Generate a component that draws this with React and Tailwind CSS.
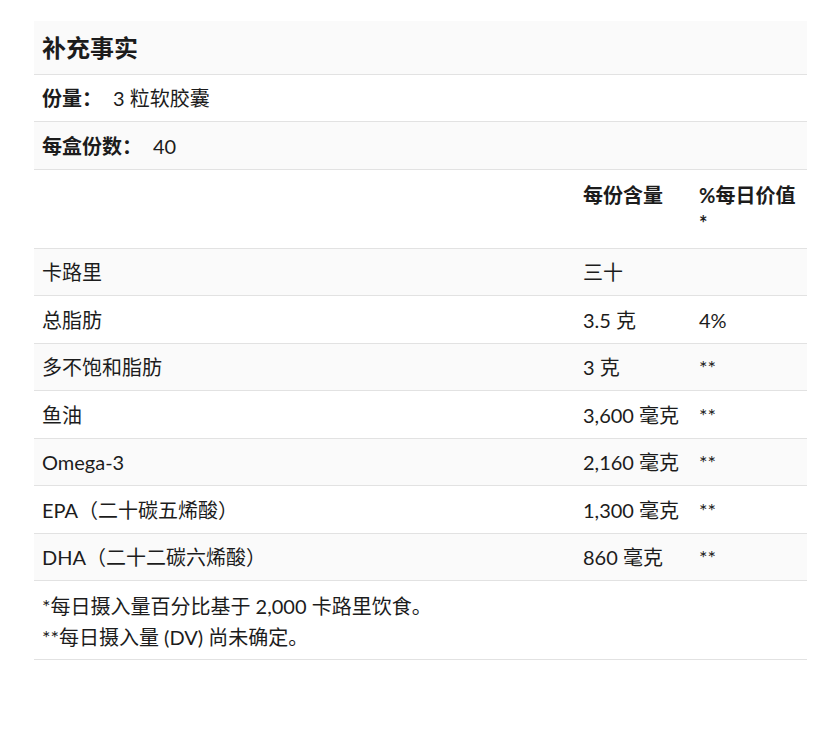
const rows = [
  { name: '卡路里', amount: '三十', dv: '' },
  { name: '总脂肪', amount: '3.5 克', dv: '4%' },
  { name: '多不饱和脂肪', amount: '3 克', dv: '**' },
  { name: '鱼油', amount: '3,600 毫克', dv: '**' },
  { name: 'Omega-3', amount: '2,160 毫克', dv: '**' },
  { name: 'EPA（二十碳五烯酸）', amount: '1,300 毫克', dv: '**' },
  { name: 'DHA（二十二碳六烯酸）', amount: '860 毫克', dv: '**' },
];

function App() {
  return (
    <div
      className="min-h-[730px] bg-white text-[#1c1c1c]"
      style={{ fontFamily: 'Lato, "Noto Sans CJK SC", sans-serif' }}
    >
      <div className="ml-[34px] w-[773px] pt-[21px]">
        {/* 标题 */}
        <div className="bg-[#fafafa] border-b border-[#e2e2e2] px-2 h-[54px] flex items-center">
          <h1 className="text-[24px] font-bold">补充事实</h1>
        </div>

        <div className="border-b border-[#e2e2e2] px-2 h-[47px] flex items-center text-[20px]">
          <span className="font-bold">份量：</span>
          <span className="ml-[11px]">3 粒软胶囊</span>
        </div>

        <div className="bg-[#fafafa] border-b border-[#e2e2e2] px-2 h-[48px] flex items-center text-[20px]">
          <span className="font-bold">每盒份数：</span>
          <span className="ml-[11px]">40</span>
        </div>

        {/* 表头 */}
        <div className="grid grid-cols-[1fr_116px_116px] border-b border-[#e2e2e2] h-[79px] text-[20px] font-bold leading-[28px]">
          <div className="px-2"></div>
          <div className="px-2 pt-[11px] whitespace-nowrap">每份含量</div>
          <div className="px-2 pt-[11px] whitespace-nowrap">
            %每日价值
            <br />*
          </div>
        </div>

        {rows.map((r, i) => (
          <div
            key={i}
            className={`grid grid-cols-[1fr_116px_116px] items-center border-b border-[#e2e2e2] text-[20px] ${
              i % 2 === 0 ? 'bg-[#fafafa] h-[47px]' : 'bg-white h-[48px]'
            }`}
          >
            <div className="px-2 whitespace-nowrap">{r.name}</div>
            <div className="px-2 whitespace-nowrap">{r.amount}</div>
            <div className="px-2 whitespace-nowrap">{r.dv}</div>
          </div>
        ))}

        {/* 脚注 */}
        <div className="border-b border-[#e2e2e2] px-2 pt-[10px] h-[79px] text-[20px] leading-[31px]">
          <p>*每日摄入量百分比基于 2,000 卡路里饮食。</p>
          <p>**每日摄入量 (DV) 尚未确定。</p>
        </div>
      </div>
    </div>
  );
}

export default App;
